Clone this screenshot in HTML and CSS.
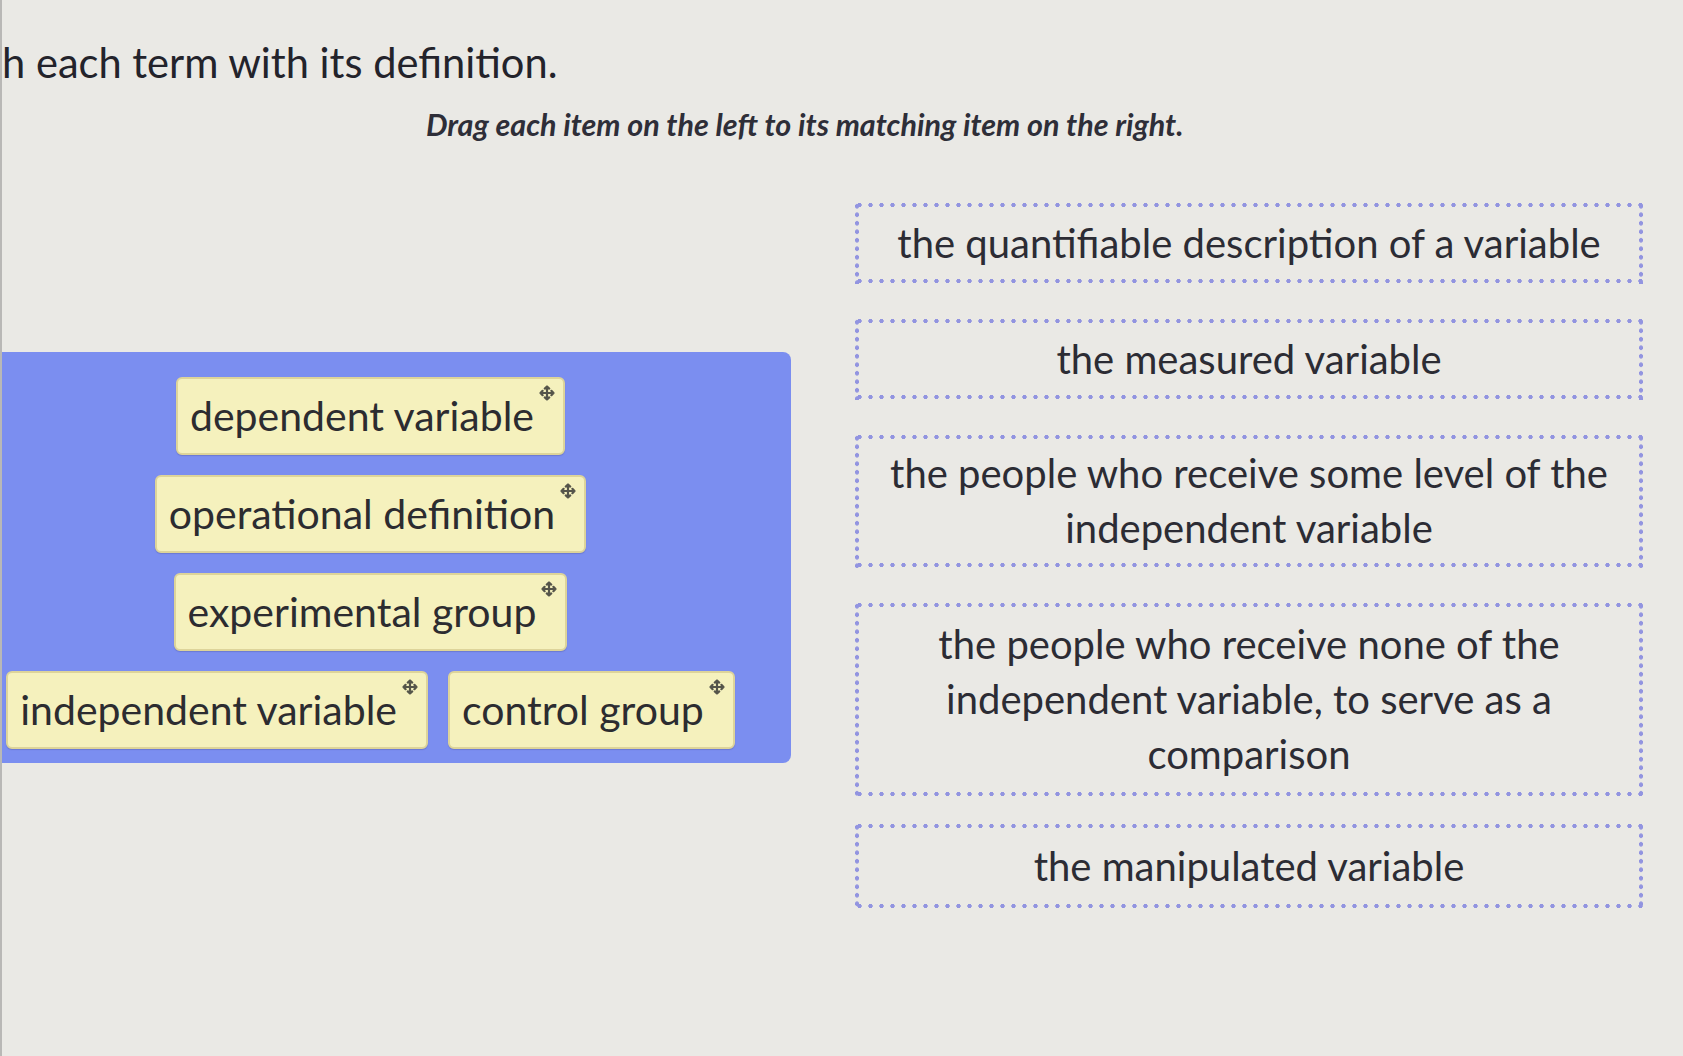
FILE: index.html
```html
<!DOCTYPE html>
<html lang="en">
<head>
<meta charset="utf-8">
<title>Match each term with its definition.</title>
<link rel="stylesheet" href="styles.css">
</head>
<body>
<div class="page">
  <h1 class="title">Match each term with its definition.</h1>
  <p class="instruction">Drag each item on the left to its matching item on the right.</p>
  <div class="board">
    <div class="source-col">
      <div class="tray">
        <div class="row">
          <div class="chip"><span class="label">dependent variable</span><svg class="move" viewBox="0 0 16 16"><path d="M8 1.5v13M1.5 8h13M5.8 3.6L8 1.5l2.2 2.1M5.8 12.4L8 14.5l2.2-2.1M3.6 5.8L1.5 8l2.1 2.2M12.4 5.8L14.5 8l-2.1 2.2"/></svg></div>
        </div>
        <div class="row">
          <div class="chip"><span class="label">operational definition</span><svg class="move" viewBox="0 0 16 16"><path d="M8 1.5v13M1.5 8h13M5.8 3.6L8 1.5l2.2 2.1M5.8 12.4L8 14.5l2.2-2.1M3.6 5.8L1.5 8l2.1 2.2M12.4 5.8L14.5 8l-2.1 2.2"/></svg></div>
        </div>
        <div class="row">
          <div class="chip"><span class="label">experimental group</span><svg class="move" viewBox="0 0 16 16"><path d="M8 1.5v13M1.5 8h13M5.8 3.6L8 1.5l2.2 2.1M5.8 12.4L8 14.5l2.2-2.1M3.6 5.8L1.5 8l2.1 2.2M12.4 5.8L14.5 8l-2.1 2.2"/></svg></div>
        </div>
        <div class="row">
          <div class="chip"><span class="label">independent variable</span><svg class="move" viewBox="0 0 16 16"><path d="M8 1.5v13M1.5 8h13M5.8 3.6L8 1.5l2.2 2.1M5.8 12.4L8 14.5l2.2-2.1M3.6 5.8L1.5 8l2.1 2.2M12.4 5.8L14.5 8l-2.1 2.2"/></svg></div>
          <div class="chip"><span class="label">control group</span><svg class="move" viewBox="0 0 16 16"><path d="M8 1.5v13M1.5 8h13M5.8 3.6L8 1.5l2.2 2.1M5.8 12.4L8 14.5l2.2-2.1M3.6 5.8L1.5 8l2.1 2.2M12.4 5.8L14.5 8l-2.1 2.2"/></svg></div>
        </div>
      </div>
    </div>
    <div class="target-col">
      <div class="drop h1">the quantifiable description of a variable</div>
      <div class="drop h1">the measured variable</div>
      <div class="drop h2">the people who receive some level of the independent variable</div>
      <div class="drop h3">the people who receive none of the independent variable, to serve as a comparison</div>
      <div class="drop h4">the manipulated variable</div>
    </div>
  </div>
</div>
</body>
</html>
```

FILE: styles.css
```css
html, body {
  margin: 0;
  padding: 0;
}
body {
  background: #eae9e5;
  font-family: Lato, "Open Sans", "Liberation Sans", sans-serif;
  color: #2c2c36;
  width: 1683px;
  height: 1056px;
  overflow: hidden;
  border-left: 2px solid #b9b8b6;
  box-sizing: border-box;
}
.page {
  display: flex;
  flex-direction: column;
}
.title {
  margin: 36px 0 0 -93px;
  font-weight: 400;
  font-size: 41.6px;
  line-height: 52px;
  white-space: nowrap;
  color: #23232b;
}
.instruction {
  margin: 18px 0 0 424px;
  font-weight: 700;
  font-style: italic;
  font-size: 30.5px;
  line-height: 36px;
  color: #2e2e38;
}
.board {
  display: flex;
  align-items: flex-start;
  margin-top: 60px;
  gap: 63px;
}
.source-col {
  padding-top: 150px;
}
.tray {
  margin-left: -52px;
  width: 841px;
  background: #7b8ef0;
  border-radius: 0 8px 8px 0;
  padding: 25px 0 14px;
  display: flex;
  flex-direction: column;
  gap: 20px;
}
.row {
  display: flex;
  justify-content: center;
  gap: 20px;
}
.chip {
  height: 78px;
  box-sizing: border-box;
  background: #f5f1bd;
  border: 2px solid #ddd49a;
  border-radius: 6px;
  display: flex;
  align-items: flex-start;
  padding: 0 8px 0 12px;
  box-shadow: 0 1px 1px rgba(60, 60, 120, 0.25);
}
.label {
  font-size: 41px;
  line-height: 74px;
  color: #2c2c30;
  white-space: nowrap;
}
.move {
  width: 16px;
  height: 16px;
  margin: 6px 0 0 5px;
  fill: none;
  stroke: #55554a;
  stroke-width: 2.2;
  stroke-linecap: round;
  stroke-linejoin: round;
}
.target-col {
  width: 790px;
  display: flex;
  flex-direction: column;
  gap: 34px;
}
.drop {
  box-sizing: border-box;
  display: flex;
  align-items: center;
  justify-content: center;
  text-align: center;
  font-size: 40px;
  line-height: 55px;
  color: #2c2c34;
  padding: 0 14px;
  background:
    radial-gradient(circle, #9294e0 1.9px, transparent 2.5px) 0 0 / 11px 6px repeat-x,
    radial-gradient(circle, #9294e0 1.9px, transparent 2.5px) 0 100% / 11px 6px repeat-x,
    radial-gradient(circle, #9294e0 1.9px, transparent 2.5px) 0 0 / 6px 8.5px repeat-y,
    radial-gradient(circle, #9294e0 1.9px, transparent 2.5px) 100% 0 / 6px 8.5px repeat-y;
}
.h1 { height: 82px; }
.h2 { height: 134px; }
.h3 { height: 195px; padding: 0 70px; }
.h4 { height: 86px; margin-top: -8px; }
```
